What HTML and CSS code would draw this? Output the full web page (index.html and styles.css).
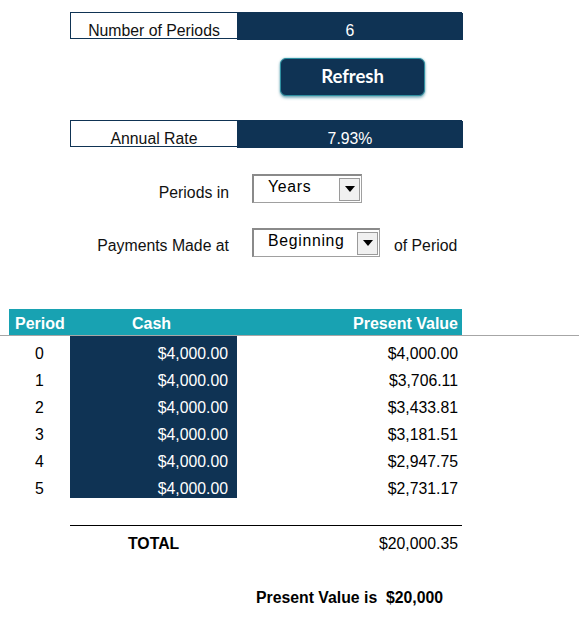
FILE: index.html
```html
<!DOCTYPE html>
<html>
<head>
<meta charset="utf-8">
<link rel="stylesheet" href="styles.css">
</head>
<body>
<div class="page">
  <div class="input-row first">
    <div class="input-label">Number of Periods</div>
    <div class="input-value">6</div>
  </div>
  <div class="refresh-wrap"><div class="refresh">Refresh</div></div>
  <div class="input-row second">
    <div class="input-label">Annual Rate</div>
    <div class="input-value">7.93%</div>
  </div>

  <div class="select-row periods">
    <div class="select-label">Periods in</div>
    <div class="select select-years"><span class="select-text">Years</span><span class="select-btn"><span class="tri"></span></span></div>
  </div>
  <div class="select-row payments">
    <div class="select-label">Payments Made at</div>
    <div class="select select-begin"><span class="select-text">Beginning</span><span class="select-btn"><span class="tri"></span></span></div>
    <div class="select-after">of Period</div>
  </div>

  <div class="table">
    <div class="thead">
      <div class="th th-period">Period</div>
      <div class="th th-cash">Cash</div>
      <div class="th th-pv">Present Value</div>
    </div>
    <div class="divider"></div>
    <div class="tbody">
      <div class="tr"><div class="td c-period">0</div><div class="td c-cash">$4,000.00</div><div class="td c-pv">$4,000.00</div></div>
      <div class="tr"><div class="td c-period">1</div><div class="td c-cash">$4,000.00</div><div class="td c-pv">$3,706.11</div></div>
      <div class="tr"><div class="td c-period">2</div><div class="td c-cash">$4,000.00</div><div class="td c-pv">$3,433.81</div></div>
      <div class="tr"><div class="td c-period">3</div><div class="td c-cash">$4,000.00</div><div class="td c-pv">$3,181.51</div></div>
      <div class="tr"><div class="td c-period">4</div><div class="td c-cash">$4,000.00</div><div class="td c-pv">$2,947.75</div></div>
      <div class="tr"><div class="td c-period">5</div><div class="td c-cash">$4,000.00</div><div class="td c-pv">$2,731.17</div></div>
    </div>
    <div class="total-line"></div>
    <div class="total-row">
      <div class="total-label">TOTAL</div>
      <div class="total-value">$20,000.35</div>
    </div>
  </div>

  <div class="summary">Present Value is&nbsp; $20,000</div>
</div>
</body>
</html>
```

FILE: styles.css
```css
* { box-sizing: border-box; }
html, body { margin: 0; padding: 0; background: #ffffff; }
body {
  font-family: "Liberation Sans", Arial, sans-serif;
  font-size: 15.8px;
  color: #000000;
}
.page { width: 579px; height: 619px; padding-top: 12px; }

.input-row {
  margin-left: 70px;
  width: 392px;
  height: 27px;
  display: grid;
  grid-template-columns: 166px 226px;
  border: 1px solid #0f3354;
}
.input-row.second { margin-top: 24px; }
.input-label {
  text-align: center;
  padding-top: 9px; line-height: 18px; color: #111;
}
.input-value {
  background: #0f3354; color: #ffffff;
  text-align: center;
  padding-top: 9px; line-height: 18px;
}

.refresh-wrap { padding-left: 280px; margin-top: 19px; }
.refresh {
  width: 145px; height: 38px;
  background: #0f3354;
  border-radius: 6px;
  border: 1px solid #2f8fa0;
  box-shadow: 0 2px 3px rgba(40,120,140,0.55), 0 0 2px rgba(40,150,170,0.6);
  color: #ffffff;
  font-family: Lato, "Open Sans", sans-serif;
  font-weight: 700; font-size: 18.5px;
  display: flex; align-items: center; justify-content: center;
  padding-bottom: 2px;
}

.select-row { display: flex; align-items: center; height: 29px; }
.select-row.periods { margin-top: 27px; }
.select-row.payments { margin-top: 25px; }
.select-label { width: 229px; text-align: right; padding-top: 8px; color: #111; }
.payments .select-label { padding-top: 6px; }
.select {
  margin-left: 23px;
  height: 29px;
  border: 1px solid #a0a0a0;
  border-top: 2px solid #8a8a8a;
  border-left: 2px solid #8a8a8a;
  background: #ffffff;
  display: flex; align-items: center; justify-content: space-between;
  padding-right: 1px;
}
.select-years { width: 110px; }
.select-begin { width: 128px; }
.select-text { padding-left: 14px; letter-spacing: 0.7px; padding-bottom: 4px; }
.select-btn {
  width: 21px; height: 23px;
  background: #f0f0f0;
  border: 1px solid #9a9a9a;
  display: flex; align-items: center; justify-content: center;
}
.tri {
  width: 0; height: 0;
  border-left: 5px solid transparent;
  border-right: 5px solid transparent;
  border-top: 6px solid #000;
}
.select-after { margin-left: 14px; padding-top: 6px; color: #111; }

.table { margin-top: 52px; }
.thead {
  margin-left: 9px; width: 453px; height: 26px;
  background: #18a2b2; color: #ffffff; font-weight: 700; font-size: 16px;
  display: grid; grid-template-columns: 61px 167px 225px;
  align-items: end; line-height: 22px;
}
.th-period { padding-left: 6px; }
.th-cash { text-align: center; padding-right: 4px; }
.th-pv { text-align: right; padding-right: 4px; }
.divider { height: 1px; background: #a6a6a6; width: 579px; }

.tbody { margin-left: 9px; width: 453px; }
.tr { display: grid; grid-template-columns: 61px 167px 225px; height: 27px; }
.td { display: flex; align-items: flex-end; padding-bottom: 0px; line-height: 18px; }
.c-period { justify-content: center; }
.c-cash { background: #0f3354; color: #ffffff; justify-content: flex-end; padding-right: 9px; }
.c-pv { justify-content: flex-end; padding-right: 4px; }

.total-line { margin-left: 70px; width: 392px; height: 1px; background: #000; margin-top: 27px; }
.total-row {
  margin-left: 70px; width: 392px; height: 27px;
  display: grid; grid-template-columns: 166px 226px;
  align-items: end; line-height: 18px;
}
.total-label { font-weight: 700; padding-left: 58px; }
.total-value { text-align: right; padding-right: 4px; }

.summary {
  margin-top: 36px; padding-left: 256px;
  font-weight: 700; font-size: 15.8px; line-height: 18px;
}
```
